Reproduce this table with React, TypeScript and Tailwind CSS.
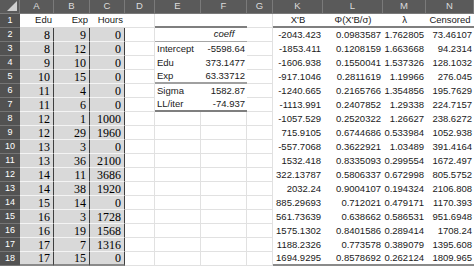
import React from 'react';

const colLetters = ['A', 'B', 'C', 'D', 'E', 'F', 'G', 'K', 'L', 'M', 'N'];

const acData = [
  [8, 9, 0], [8, 12, 0], [9, 10, 0], [10, 15, 0], [11, 4, 0], [11, 6, 0],
  [12, 1, 1000], [12, 29, 1960], [13, 3, 0], [13, 36, 2100], [14, 11, 3686],
  [14, 38, 1920], [15, 14, 0], [16, 3, 1728], [16, 19, 1568], [17, 7, 1316], [17, 15, 0],
];

const efData = [
  ['', 'coeff'],
  ['Intercept', '-5598.64'],
  ['Edu', '373.1477'],
  ['Exp', '63.33712'],
  ['Sigma', '1582.87'],
  ['LL/iter', '-74.937'],
];

const knData = [
  ['-2043.423', '0.0983587', '1.762805', '73.46107'],
  ['-1853.411', '0.1208159', '1.663668', '94.2314'],
  ['-1606.938', '0.1550041', '1.537326', '128.1032'],
  ['-917.1046', '0.2811619', '1.19966', '276.045'],
  ['-1240.665', '0.2165766', '1.354856', '195.7629'],
  ['-1113.991', '0.2407852', '1.29338', '224.7157'],
  ['-1057.529', '0.2520322', '1.26627', '238.6272'],
  ['715.9105', '0.6744686', '0.533984', '1052.938'],
  ['-557.7068', '0.3622921', '1.03489', '391.4164'],
  ['1532.418', '0.8335093', '0.299554', '1672.497'],
  ['322.13787', '0.5806337', '0.672998', '805.5752'],
  ['2032.24', '0.9004107', '0.194324', '2106.808'],
  ['885.29693', '0.712021', '0.479171', '1170.393'],
  ['561.73639', '0.638662', '0.586531', '951.6948'],
  ['1575.1302', '0.8401586', '0.289414', '1708.24'],
  ['1188.2326', '0.773578', '0.389079', '1395.608'],
  ['1694.9295', '0.8578692', '0.262124', '1809.965'],
];

const base = 'h-[14px] flex items-center overflow-hidden whitespace-nowrap';
const grid = 'bg-white border-r border-b border-[#e1e1e1]';

const Cell: React.FC<{ className?: string; children?: React.ReactNode }> = ({ className = '', children }) => (
  <div className={`${base} ${className}`}>{children}</div>
);

export default function App() {
  const rows = Array.from({ length: 18 }, (_, i) => i + 1);

  return (
    <div className="w-[474px] h-[266px] overflow-hidden bg-white font-['Liberation_Sans',Arial,sans-serif] text-[9.5px] text-[#1a1a1a]">
      <div className="grid grid-cols-[20px_34px_36px_35px_30px_46px_46px_26px_50px_60px_43px_48px]">
        {/* column headers */}
        <div className="h-[14px] bg-[#5a5a5a] border-r border-b border-[#7a7a7a] relative">
          <svg className="absolute right-[2px] bottom-[2px]" width="10" height="10" viewBox="0 0 10 10">
            <polygon points="10,0 10,10 0,10" fill="#cfcfcf" />
          </svg>
        </div>
        {colLetters.map((l) => (
          <Cell key={l} className="justify-center bg-[#5a5a5a] text-[#dcdcdc] border-r border-b border-[#7a7a7a]">
            {l}
          </Cell>
        ))}

        {rows.map((r) => (
          <React.Fragment key={r}>
            <Cell className="justify-center bg-[#525252] text-white border-b border-[#757575] text-[9px]">
              {r}
            </Cell>

            {/* A - C */}
            {r === 1
              ? ['Edu', 'Exp', 'Hours'].map((h) => (
                  <Cell key={h} className="justify-end pr-[2px] bg-white border-b border-[#d9d9d9]">
                    {h}
                  </Cell>
                ))
              : acData[r - 2].map((v, i) => (
                  <Cell
                    key={i}
                    className={`justify-end pr-[3px] bg-[#d9d9d9] border-r border-r-[#3f3f3f] font-['Liberation_Serif',serif] text-[12px] text-black ${
                      r === 18 ? 'border-b-2 border-b-[#8a8a8a]' : 'border-b border-b-[#f4f4f4]'
                    }`}
                  >
                    {v}
                  </Cell>
                ))}

            {/* D */}
            <Cell className={grid} />

            {/* E - F */}
            {r === 1 && (
              <>
                <Cell className="bg-white border-b-2 border-[#7f7f7f]" />
                <Cell className="bg-white border-b-2 border-[#7f7f7f]" />
              </>
            )}
            {r >= 2 && r <= 7 && (
              <>
                <Cell
                  className={`pl-[2px] bg-white ${
                    r === 2 ? 'border-b border-[#a6a6a6]' : r === 5 ? 'border-b-2 border-[#a0a0a0]' : r === 7 ? 'border-b-2 border-[#7f7f7f]' : ''
                  }`}
                >
                  {efData[r - 2][0]}
                </Cell>
                <Cell
                  className={`bg-white ${r === 2 ? 'justify-center italic' : 'justify-end pr-[2px]'} ${
                    r === 2 ? 'border-b border-[#a6a6a6]' : r === 5 ? 'border-b-2 border-[#a0a0a0]' : r === 7 ? 'border-b-2 border-[#7f7f7f]' : ''
                  }`}
                >
                  {efData[r - 2][1]}
                </Cell>
              </>
            )}
            {r >= 8 && (
              <>
                <Cell className={grid} />
                <Cell className={grid} />
              </>
            )}

            {/* G */}
            <Cell className={grid} />

            {/* K - N */}
            {r === 1
              ? ["X'B", "Φ(X'B/σ)", 'λ', 'Censored'].map((h) => (
                  <Cell key={h} className="justify-center bg-white border-b-2 border-[#7f7f7f]">
                    {h}
                  </Cell>
                ))
              : knData[r - 2].map((v, i) => (
                  <Cell
                    key={i}
                    className={`justify-end pr-[2px] bg-white ${r === 18 ? 'border-b-2 border-[#8a8a8a]' : ''}`}
                  >
                    {v}
                  </Cell>
                ))}
          </React.Fragment>
        ))}
      </div>
    </div>
  );
}
